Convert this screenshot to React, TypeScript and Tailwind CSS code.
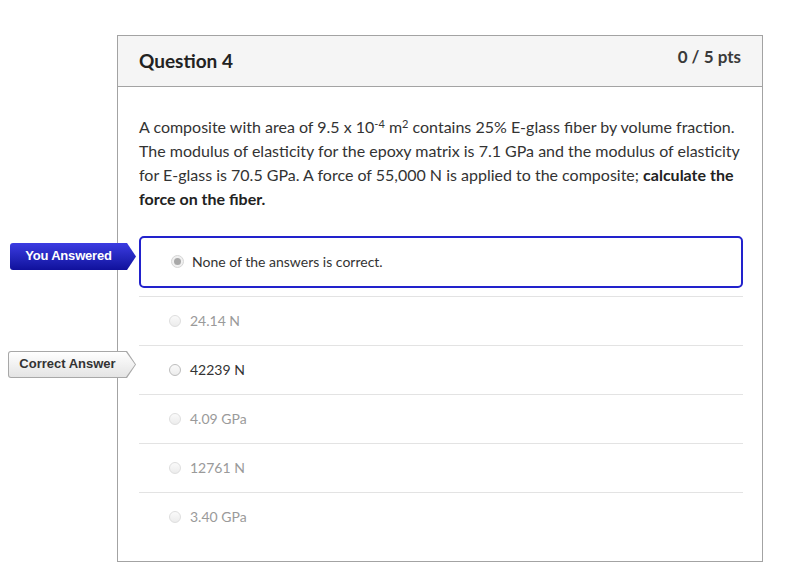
import React from "react";

function Radio({ dark = false }: { dark?: boolean }) {
  return (
    <span
      className={`inline-block w-[12px] h-[12px] rounded-full border bg-gradient-to-b from-[#fafafa] to-[#ececec] ${
        dark ? "border-[#bdbdbd]" : "border-[#dedede]"
      }`}
    />
  );
}

function Row({ text, dark = false }: { text: string; dark?: boolean }) {
  return (
    <div className="h-[49px] border-t border-[#e3e3e3] flex items-center pl-[30px] gap-[9px] pb-[1px]">
      <Radio dark={dark} />
      <span className={`text-[14px] ${dark ? "text-[#333]" : "text-[#9a9a9a]"}`}>{text}</span>
    </div>
  );
}

export default function App() {
  return (
    <div className="w-[807px] h-[568px] bg-white overflow-hidden font-['Lato','Noto_Sans',sans-serif] text-[#2d3138]">
      <div className="pt-[35px] pl-[117px]">
        <div className="w-[646px] h-[527px] border border-[#a3a3a3]">
          <div className="h-[51px] bg-[#f5f5f5] border-b border-[#a3a3a3] flex items-center justify-between px-[21px]">
            <span className="text-[19px] font-bold text-[#222]">Question 4</span>
            <span className="text-[17px] font-bold text-[#3a3a3a] mb-[8px]">0 / 5 pts</span>
          </div>
          <div className="pt-[28px] px-[21px]">
            <p className="text-[16px] leading-[24px] text-[#333]">
              A composite with area of 9.5 x 10
              <sup className="text-[11px] leading-none">-4</sup> m
              <sup className="text-[11px] leading-none">2</sup> contains 25% E-glass fiber by volume fraction.
              The modulus of elasticity for the epoxy matrix is 7.1 GPa and the modulus of elasticity for E-glass is
              70.5 GPa. A force of 55,000 N is applied to the composite;{" "}
              <strong className="font-bold text-[#222]">calculate the force on the fiber.</strong>
            </p>
            <div className="mt-[25px] w-[604px]">
              <div className="relative">
                <div className="absolute top-[7px] left-[-129px] w-[126px] h-[27px] rounded-l-[3px] bg-gradient-to-b from-[#3c3ce2] to-[#10109c] [clip-path:polygon(0_0,calc(100%-9px)_0,100%_50%,calc(100%-9px)_100%,0_100%)] flex items-center justify-center pr-[9px] pb-[1px]">
                  <span className="font-['Liberation_Sans',Arial,sans-serif] font-bold text-[13px] text-white tracking-[-0.2px]">
                    You Answered
                  </span>
                </div>
                <div className="h-[52px] border-2 border-[#2222cc] rounded-[5px] flex items-center pl-[30px] gap-[8px] pb-[2px]">
                  <span className="w-[13px] h-[13px] rounded-full border border-[#d6d6d6] bg-[#f0f0f0] flex items-center justify-center">
                    <span className="w-[7px] h-[7px] rounded-full bg-[#a8a8a8]" />
                  </span>
                  <span className="text-[14px] text-[#333]">None of the answers is correct.</span>
                </div>
              </div>
              <div className="mt-[8px]">
                <Row text="24.14 N" />
                <div className="relative">
                  <div className="absolute top-[6px] left-[-131px] w-[128px] h-[27px] rounded-l-[3px] bg-[#a8a8a8] [clip-path:polygon(0_0,calc(100%-9px)_0,100%_50%,calc(100%-9px)_100%,0_100%)]">
                    <div className="absolute inset-[1px] rounded-l-[2px] bg-gradient-to-b from-[#ffffff] to-[#e4e4e4] [clip-path:polygon(0_0,calc(100%-9px)_0,100%_50%,calc(100%-9px)_100%,0_100%)] flex items-center justify-center pr-[9px] pb-[1px]">
                      <span className="font-['Liberation_Sans',Arial,sans-serif] font-bold text-[13px] text-[#333]">
                        Correct Answer
                      </span>
                    </div>
                  </div>
                  <Row text="42239 N" dark />
                </div>
                <Row text="4.09 GPa" />
                <Row text="12761 N" />
                <Row text="3.40 GPa" />
              </div>
            </div>
          </div>
        </div>
      </div>
    </div>
  );
}
